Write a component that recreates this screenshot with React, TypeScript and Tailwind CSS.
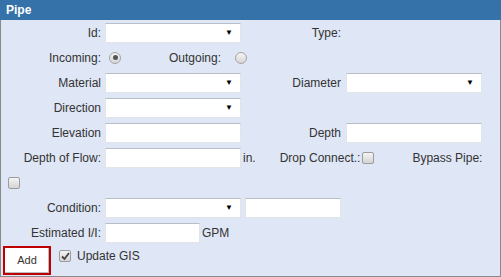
import React from "react";

const L1 = ({ children }: { children?: React.ReactNode }) => (
  <div className="w-[100px] shrink-0 text-right">{children}</div>
);
const L2 = ({ children }: { children?: React.ReactNode }) => (
  <div className="w-[100px] shrink-0 text-right">{children}</div>
);

const inputCls =
  "h-[20px] bg-white border border-[#e2e4e8] border-t-[#b7bec7] shrink-0";

const Select = ({ w = "w-[136px]", ml = "ml-[4px]" }: { w?: string; ml?: string }) => (
  <div className={`${inputCls} ${w} ${ml} flex items-center justify-end pr-[7px]`}>
    <span className="text-[8px] leading-none text-black">▼</span>
  </div>
);
const Input = ({ w = "w-[136px]", ml = "ml-[4px]" }: { w?: string; ml?: string }) => (
  <div className={`${inputCls} ${w} ${ml}`} />
);

const Radio = ({ checked, cls }: { checked?: boolean; cls?: string }) => (
  <div
    className={`w-[12px] h-[12px] rounded-full border border-[#a3a3a3] bg-gradient-to-b from-[#f4f4f4] to-[#d6d6d6] flex items-center justify-center shrink-0 ${cls ?? ""}`}
  >
    {checked && <div className="w-[5px] h-[5px] rounded-full bg-[#555]" />}
  </div>
);

const Check = ({ checked, cls }: { checked?: boolean; cls?: string }) => (
  <div
    className={`w-[12px] h-[12px] rounded-[2px] border border-[#9c9c9c] bg-gradient-to-b from-[#f4f4f4] to-[#d4d4d4] flex items-center justify-center shrink-0 ${cls ?? ""}`}
  >
    {checked && (
      <svg width="9" height="9" viewBox="0 0 9 9">
        <path d="M1 4.5 L3.5 7 L8 1" fill="none" stroke="#444" strokeWidth="1.8" />
      </svg>
    )}
  </div>
);

export default function App() {
  return (
    <div
      className="w-[501px] h-[277px] text-[12px] text-[#333] leading-none"
      style={{ fontFamily: '"Liberation Sans", Arial, sans-serif' }}
    >
      <div className="h-[20px] bg-[#3572a9] text-white font-bold text-[12px] pl-[6px] flex items-center">
        Pipe
      </div>
      <div className="h-[257px] bg-[#dfe6f5] border-l border-r border-b border-[#8a8a8a]">
        <div className="h-[25px] flex items-center">
          <L1>Id:</L1>
          <Select />
          <L2>Type:</L2>
        </div>
        <div className="h-[25px] flex items-center">
          <L1>Incoming:</L1>
          <Radio checked cls="ml-[8px]" />
          <L1>Outgoing:</L1>
          <Radio cls="ml-[14px]" />
        </div>
        <div className="h-[25px] flex items-center">
          <L1>Material</L1>
          <Select />
          <L2>Diameter</L2>
          <Select ml="ml-[5px]" />
        </div>
        <div className="h-[25px] flex items-center">
          <L1>Direction</L1>
          <Select />
        </div>
        <div className="h-[25px] flex items-center">
          <L1>Elevation</L1>
          <Input />
          <L2>Depth</L2>
          <Input ml="ml-[5px]" />
        </div>
        <div className="h-[25px] flex items-center">
          <L1>Depth of Flow:</L1>
          <Input />
          <span className="ml-[2px]">in.</span>
          <span className="ml-[24px]">Drop Connect.:</span>
          <Check cls="ml-[2px]" />
          <span className="ml-[38px]">Bypass Pipe:</span>
        </div>
        <div className="h-[25px] flex items-center">
          <Check cls="ml-[7px]" />
        </div>
        <div className="h-[25px] flex items-center">
          <L1>Condition:</L1>
          <Select />
          <Input w="w-[96px]" ml="ml-[4px]" />
        </div>
        <div className="h-[25px] flex items-center">
          <L1>Estimated I/I:</L1>
          <Input w="w-[95px]" />
          <span className="ml-[2px]">GPM</span>
        </div>
        <div className="flex items-start pt-[1px]">
          <button className="ml-[2px] w-[48px] h-[29px] bg-white border-2 border-[#c00000] text-[11px] text-[#333] shadow-[inset_-1px_-1px_0_#bbb]">
            Add
          </button>
          <div className="flex items-center mt-[4px]">
            <Check checked cls="ml-[8px]" />
            <span className="ml-[6px]">Update GIS</span>
          </div>
        </div>
      </div>
    </div>
  );
}
